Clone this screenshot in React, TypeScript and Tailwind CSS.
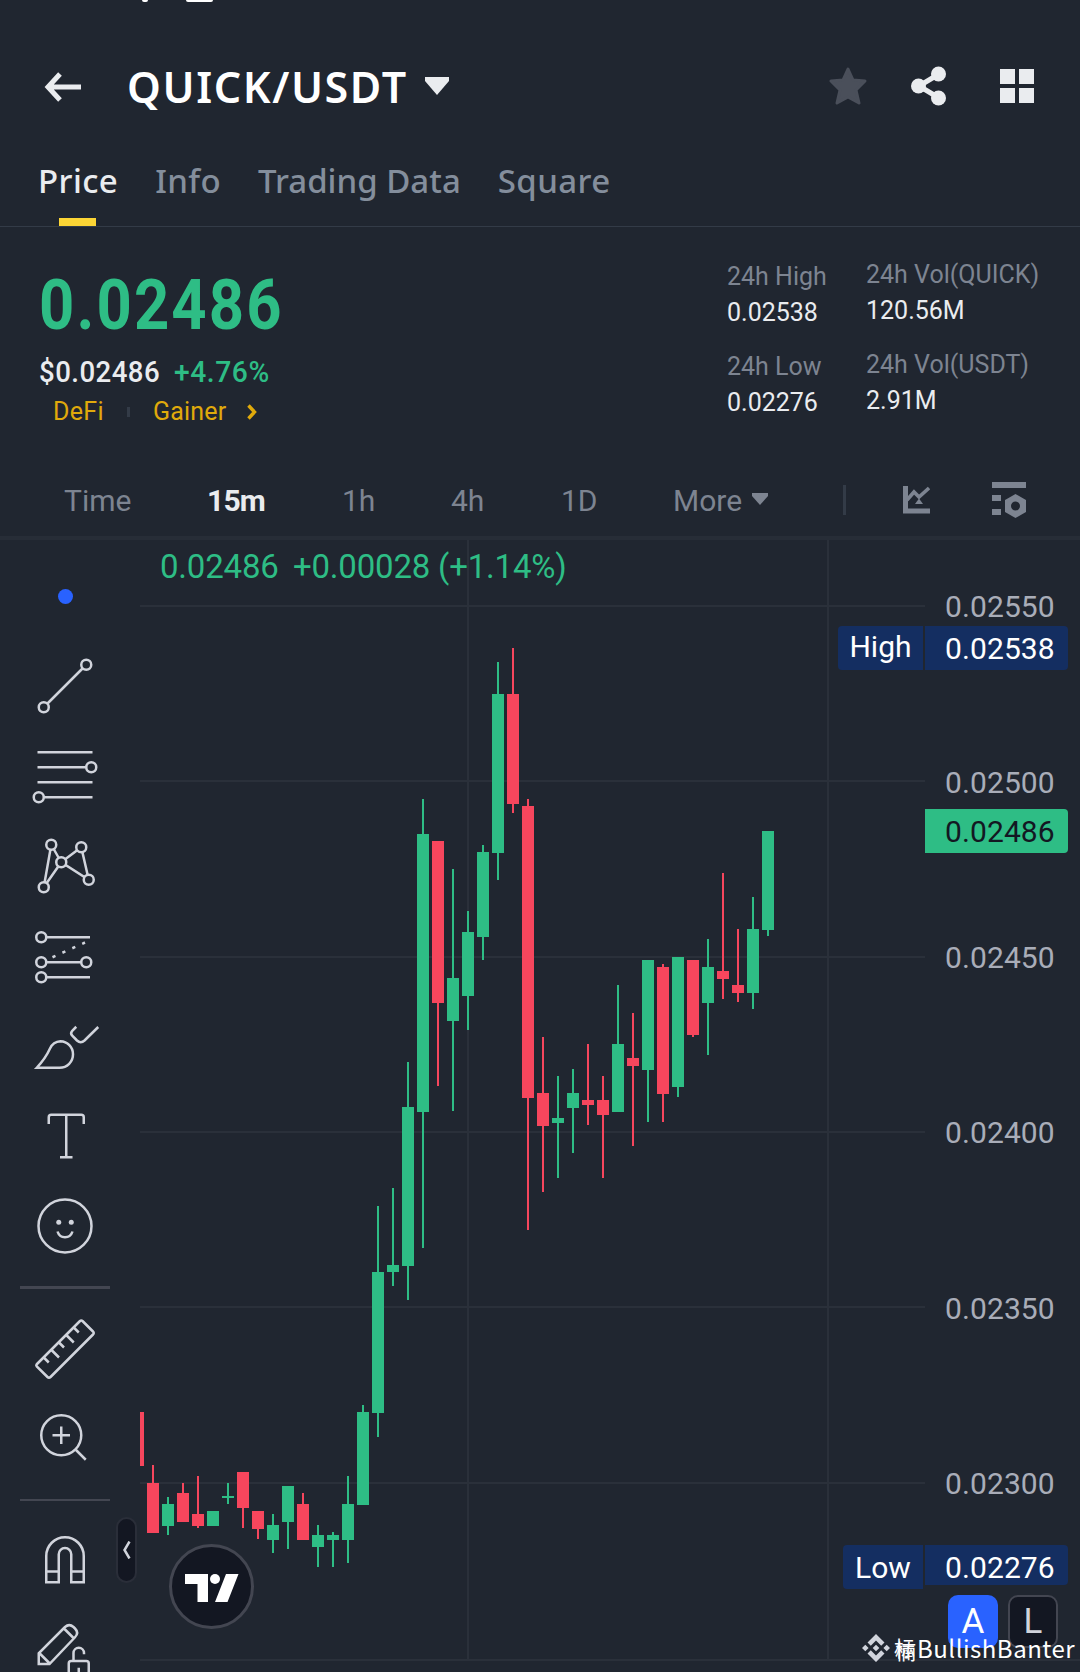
import type { ReactNode } from 'react'

// x, wick top, body top, body bottom, wick bottom, rising
type Candle = [number, number, number, number, number, boolean]

const candles: Candle[] = [
  [147, 1465, 1483, 1533, 1533, false],
  [162, 1497, 1504, 1526, 1535, true],
  [177, 1483, 1493, 1522, 1522, false],
  [192, 1476, 1514, 1526, 1528, false],
  [207, 1511, 1511, 1526, 1526, true],
  [222, 1483, 1496, 1498, 1504, true],
  [237, 1472, 1472, 1508, 1528, false],
  [252, 1511, 1511, 1529, 1539, false],
  [267, 1514, 1525, 1540, 1553, true],
  [282, 1486, 1486, 1522, 1549, true],
  [297, 1493, 1504, 1540, 1540, false],
  [312, 1525, 1535, 1547, 1567, true],
  [327, 1532, 1535, 1540, 1567, true],
  [342, 1476, 1504, 1540, 1563, true],
  [357, 1405, 1412, 1505, 1505, true],
  [372, 1206, 1272, 1413, 1437, true],
  [387, 1188, 1265, 1272, 1286, true],
  [402, 1062, 1107, 1266, 1300, true],
  [417, 799, 834, 1112, 1248, true],
  [432, 841, 841, 1003, 1086, false],
  [447, 869, 978, 1021, 1111, true],
  [462, 911, 932, 996, 1030, true],
  [477, 845, 852, 937, 960, true],
  [492, 662, 694, 853, 880, true],
  [507, 648, 694, 804, 813, false],
  [522, 799, 806, 1098, 1230, false],
  [537, 1037, 1093, 1126, 1192, false],
  [552, 1076, 1118, 1123, 1178, true],
  [567, 1069, 1093, 1108, 1153, true],
  [582, 1044, 1100, 1105, 1125, false],
  [597, 1076, 1100, 1115, 1178, false],
  [612, 985, 1044, 1112, 1112, true],
  [627, 1013, 1058, 1066, 1146, false],
  [642, 960, 960, 1070, 1122, true],
  [657, 964, 967, 1094, 1122, false],
  [672, 957, 957, 1087, 1097, true],
  [687, 960, 960, 1035, 1037, false],
  [702, 939, 967, 1003, 1055, true],
  [717, 873, 971, 979, 999, false],
  [732, 929, 985, 993, 1002, false],
  [747, 897, 929, 993, 1009, true],
  [762, 831, 831, 930, 936, true],
]

const gridRows = [605, 780, 956, 1131, 1306, 1482, 1659]
const gridCols = [467, 827]

const axisLabels = [
  { text: '0.02550', y: 607 },
  { text: '0.02500', y: 783 },
  { text: '0.02450', y: 958 },
  { text: '0.02400', y: 1133 },
  { text: '0.02350', y: 1309 },
  { text: '0.02300', y: 1484 },
]

function Header() {
  return (
    <header className="flex h-[150px] items-center pt-[23px] pl-[44px]">
      <svg width="38" height="30" viewBox="0 0 38 30" fill="none" stroke="#eaecef" strokeWidth="5">
        <path d="M37 15H4M16 2 4 15l12 13" />
      </svg>
      <h1 className="ml-[45px] w-[298px] text-[43px] leading-none font-semibold tracking-[1.6px] whitespace-nowrap text-white">
        QUICK/USDT
      </h1>
      <svg width="24" height="18" viewBox="0 0 24 18" fill="#eaecef" className="-mt-[2px]">
        <path d="M0 0h24v4L12 18 0 4z" />
      </svg>
      <div className="-mt-[2px] ml-[380px] flex items-center">
        <svg width="38" height="40" viewBox="0 0 38 40" fill="#4a4f5a" stroke="#4a4f5a" strokeWidth="3" strokeLinejoin="round">
          <path d="M19 3l5 11 12 1-9 9 3 13-11-6-11 6 3-13-9-9 12-1z" />
        </svg>
        <svg width="38" height="40" viewBox="0 0 38 40" className="ml-[43px]" fill="#eaecef">
          <path d="M29 8 9 20l20 12" fill="none" stroke="#eaecef" strokeWidth="5" />
          <circle cx="8.5" cy="20" r="7.5" />
          <circle cx="28.5" cy="8" r="7.5" />
          <circle cx="28.5" cy="32" r="7.5" />
        </svg>
        <svg width="34" height="34" viewBox="0 0 34 34" className="ml-[52px]" fill="#eaecef">
          <path d="M0 0h15v15H0zM19 0h15v15H19zM0 19h15v15H0zM19 19h15v15H19z" />
        </svg>
      </div>
    </header>
  )
}

function Tabs() {
  return (
    <nav className="flex h-[77px] gap-[37px] border-b border-[#333b47] pt-[14px] pl-[38px] text-[33px] leading-none font-medium tracking-[0.4px] text-[#848e9c]">
      <div className="relative text-[#eaecef]">
        Price
        <div className="absolute bottom-0 left-[21px] h-[8px] w-[37px] bg-[#fcd535]" />
      </div>
      <div>Info</div>
      <div className="tracking-[0px]">Trading Data</div>
      <div>Square</div>
    </nav>
  )
}

function Stat({ label, value }: { label: string; value: string }) {
  return (
    <div className="mb-[29px] text-[25px] leading-[25px] whitespace-nowrap">
      <div className="text-[#7d8491]">{label}</div>
      <div className="mt-[11px] text-[#eaecef]">{value}</div>
    </div>
  )
}

function Summary() {
  return (
    <section className="flex h-[233px] font-['Roboto',sans-serif]">
      <div className="w-[727px] pt-[43px] pl-[39px]">
        <div className="origin-left scale-x-[0.88] text-[70px] leading-none font-bold tracking-[2.4px] text-[#2ebd85]">
          0.02486
        </div>
        <div className="mt-[17px] flex text-[30px] leading-none font-medium">
          <span className="w-[135px] origin-left scale-x-[0.92] tracking-[0.5px] text-[#eaecef]">$0.02486</span>
          <span className="origin-left scale-x-[0.94] tracking-[0.6px] text-[#2ebd85]">+4.76%</span>
        </div>
        <div className="mt-[12px] flex items-center pl-[14px] text-[25px] leading-none text-[#e0aa0b]">
          <span className="w-[74px] tracking-[0.3px]">DeFi</span>
          <span className="h-[10px] w-[3px] bg-[#333b47]" />
          <span className="ml-[23px] w-[94px] tracking-[0.2px]">Gainer</span>
          <svg width="10" height="16" viewBox="0 0 10 16" fill="none" stroke="#e0aa0b" strokeWidth="3.4">
            <path d="M1.500 1.500 7.500 8l-6 6.500" />
          </svg>
        </div>
      </div>
      <div className="w-[139px] pt-[37px]">
        <Stat label="24h High" value="0.02538" />
        <Stat label="24h Low" value="0.02276" />
      </div>
      <div className="pt-[35px]">
        <Stat label="24h Vol(QUICK)" value="120.56M" />
        <Stat label="24h Vol(USDT)" value="2.91M" />
      </div>
    </section>
  )
}

function Timeframes() {
  return (
    <div className="flex h-[80px] items-center border-b-4 border-[#272d37] pt-[3px] pl-[64px] font-['Roboto',sans-serif] text-[30px] leading-none text-[#7d8491]">
      <span className="w-[143px] pt-[3px]">Time</span>
      <span className="w-[135px] pt-[3px] font-bold tracking-[-0.8px] text-[#eaecef]">15m</span>
      <span className="w-[109px] pt-[3px]">1h</span>
      <span className="w-[110px] pt-[3px]">4h</span>
      <span className="w-[112px] pt-[3px]">1D</span>
      <span className="w-[79px] pt-[3px]">More</span>
      <svg width="16" height="12" viewBox="0 0 16 12" fill="#7d8491" className="-mt-[2px]">
        <path d="M0 0h16v3L8 12 0 3z" />
      </svg>
      <div className="ml-[75px] h-[30px] w-[3px] bg-[#333b47]" />
      <svg width="27" height="28" viewBox="0 0 27 28" className="ml-[57px]" fill="none" stroke="#7d8491">
        <path d="M2.500 0v25H27" strokeWidth="5" />
        <path d="M4 14l7-8 5 5 10-9" strokeWidth="3.600" />
        <path d="M16 12.500l4 5.500h-8z" fill="#7d8491" stroke="none" />
      </svg>
      <svg width="34" height="36" viewBox="0 0 34 36" className="ml-[62px]" fill="#7d8491">
        <path d="M0 0h34v6H0zM0 13h9v6H0zM0 27h9v6H0z" />
        <path fillRule="evenodd" d="M23.500 12 34 18v12l-10.500 6L13 30V18zM23.500 19.500a4.500 4.500 0 1 0 0 9 4.500 4.500 0 0 0 0-9z" />
      </svg>
    </div>
  )
}

function Tool({ children }: { children: ReactNode }) {
  return (
    <div className="flex h-[90px] w-[90px] shrink-0 items-center justify-center">
      <svg width="70" height="70" viewBox="0 0 28 28" fill="none" stroke="#d1d4dc" strokeWidth="1" className="overflow-visible">
        {children}
      </svg>
    </div>
  )
}

function Toolbar() {
  return (
    <aside className="relative flex w-[140px] shrink-0 flex-col pt-[11px] pl-[20px]">
      <div className="flex h-[90px] w-[90px] shrink-0 items-center justify-center">
        <div className="h-[15px] w-[15px] rounded-full bg-[#2962ff]" />
      </div>
      <Tool>
        <path d="M7 21 21 7" />
        <circle cx="22.500" cy="5.500" r="2" />
        <circle cx="5.500" cy="22.500" r="2" />
      </Tool>
      <Tool>
        <path d="M3 4.500h22M3 10.500h19.500M3 16.500h22M5.500 22.500H25" />
        <circle cx="24.500" cy="10.500" r="2" />
        <circle cx="3.500" cy="22.500" r="2" />
      </Tool>
      <Tool>
        <path d="M5.500 22.500l3-17 4 7 8-6 3 13-11-7z" />
        <g fill="#202630">
          <circle cx="8.500" cy="5.500" r="2" />
          <circle cx="20.500" cy="6.500" r="2" />
          <circle cx="12.500" cy="12.500" r="2" />
          <circle cx="23.500" cy="19.500" r="2" />
          <circle cx="5.500" cy="22.500" r="2" />
        </g>
      </Tool>
      <Tool>
        <path d="M6.500 6.500H24M6.500 16.500h14M6.500 22.500H24" />
        <path d="M9 14.500 22 8.600" strokeDasharray="1.300 3.050" />
        <circle cx="4.500" cy="6.500" r="2" />
        <circle cx="4.500" cy="16.500" r="2" />
        <circle cx="22.500" cy="16.500" r="2" />
        <circle cx="4.500" cy="22.500" r="2" />
      </Tool>
      <Tool>
        <path d="M2.700 22.700C5.600 19.600 7 17.200 8 15a5 5 0 0 1 4.200-2.900 5.200 5.200 0 0 1 5 5.200c0 3-2.300 5.400-5.400 5.400z" />
        <path d="M18.500 6.300l-1.600 1.600q-.9 1 0 2l1.900 1.900q1.500 1.400 3 0l5.500-5.400" />
      </Tool>
      <Tool>
        <path d="M7.500 9.200V6.500a1 1 0 0 1 1-1h12a1 1 0 0 1 1 1v2.700M14.500 5.500v17M12 22.500h5" />
      </Tool>
      <Tool>
        <circle cx="14" cy="14" r="10.600" />
        <g fill="#d1d4dc" stroke="none">
          <circle cx="11.500" cy="12.500" r="1" />
          <circle cx="16.500" cy="12.500" r="1" />
        </g>
        <path d="M11 16.200c.5 1.600 1.700 2.300 3 2.300s2.500-.7 3-2.300" />
      </Tool>

      <div className="mt-[15px] mb-[15px] h-[3px] w-[90px] shrink-0 bg-[#434651]" />

      <Tool>
        <path d="M2.700 20.100 19.900 2.900q.6-.6 1.200 0l4.100 4.100q.6.600 0 1.200L8.200 25.200q-.6.600-1.200 0l-4.300-4.200q-.4-.5 0-.9z" />
        <path d="M5.500 17.400l2 2M8.600 14.400l3 3M11.600 11.400l2 2M14.500 8.400l3 3M17.500 5.400l2 2" />
      </Tool>
      <Tool>
        <circle cx="12.500" cy="12.500" r="8" />
        <path d="M12.500 9v7M9 12.500h7M18.300 18.300l4 4" />
      </Tool>

      <div className="mt-[15px] mb-[15px] h-[2px] w-[90px] shrink-0 bg-[#434651]" />

      <Tool>
        <path d="M6.500 22.500V12a7.500 7.500 0 0 1 15 0v10.500h-5V11.300a2.500 2.500 0 0 0-5 0v11.200zM6.500 18.200h5M16.500 18.200h5" />
      </Tool>
      <Tool>
        <path d="M3.500 19.200v-4.300L14 4.400q1.700-1.500 3.400 0l.6.600q1.700 1.700 0 3.500L7.800 19.200zM3.500 14.600l4.500 4.500M13.500 4.900l4 4" />
        <path d="M17.400 18v-3.200a2.100 2.100 0 0 1 4.200 0v.5M15.500 26v-7q0-1 1-1h6q1 0 1 1v7M19.500 20.700V26" />
      </Tool>

      {/* collapse handle */}
      <div className="absolute top-[977px] left-[116px] flex h-[66px] w-[21px] items-center justify-center rounded-full border-2 border-[#2a2e39] bg-[#131722]">
        <svg width="8" height="18" viewBox="0 0 8 18" fill="none" stroke="#d1d4dc" strokeWidth="2.500">
          <path d="M6.500.5 1.500 9l5 8.500" />
        </svg>
      </div>
    </aside>
  )
}

function Chart() {
  return (
    <div className="relative h-full w-[785px] shrink-0">
      <svg width="785" height="1132" viewBox="140 540 785 1132" shapeRendering="crispEdges">
        {gridRows.map((y) => (
          <rect key={y} x="140" y={y} width="785" height="2" fill="#2a303a" />
        ))}
        {gridCols.map((x) => (
          <rect key={x} x={x} y="540" width="2" height="1120" fill="#2a303a" />
        ))}
        <rect x="140" y="1412" width="4" height="54" fill="#f6465d" />
        {candles.map(([x, high, top, bottom, low, up]) => (
          <g key={x} fill={up ? '#2ebd85' : '#f6465d'}>
            <rect x={x + 5} y={high} width="2" height={low - high} />
            <rect x={x} y={top} width="12" height={bottom - top} />
          </g>
        ))}
      </svg>

      <div className="absolute top-[10px] left-[20px] flex font-['Roboto',sans-serif] text-[33px] leading-none tracking-[-0.2px] whitespace-nowrap text-[#2ebd85]">
        <span className="w-[133px]">0.02486</span>
        <span>+0.00028 (+1.14%)</span>
      </div>

      <svg className="absolute top-[1004px] left-[29px]" width="85" height="85" viewBox="0 0 85 85">
        <circle cx="42.500" cy="42.500" r="41" fill="#131722" stroke="#434651" strokeWidth="3" />
        <g fill="#fff">
          <path d="M16 30h23v28H28.500V40H16zM57 30h12.500L58.500 58H46z" />
          <circle cx="46" cy="35" r="5" />
        </g>
      </svg>
    </div>
  )
}

type PriceTagProps = { top: string; name: string; price: string; nameClass: string; priceClass: string }

function PriceTag({ top, name, price, nameClass, priceClass }: PriceTagProps) {
  return (
    <div className={`absolute right-[12px] flex gap-[2px] text-[30px] leading-none text-white ${top}`}>
      <div className={`flex h-[44px] items-center justify-center rounded-l-[4px] bg-[#142e61] ${nameClass}`}>{name}</div>
      <div className={`w-[143px] rounded-r-[4px] bg-[#142e61] pt-[8px] pl-[20px] tracking-[0.1px] ${priceClass}`}>{price}</div>
    </div>
  )
}

function Axis() {
  return (
    <div className="relative h-full w-[155px] font-['Roboto',sans-serif] text-[30px] leading-none">
      {axisLabels.map((l) => (
        <div key={l.text} className="absolute left-[20px] tracking-[0.1px] text-[#a9adb8]" style={{ top: l.y - 540 - 15 }}>
          {l.text}
        </div>
      ))}
      <PriceTag top="top-[86px]" name="High" price="0.02538" nameClass="w-[85px] pb-[3px]" priceClass="h-[44px]" />
      <div className="absolute top-[269px] left-0 h-[44px] w-[143px] rounded-r-[4px] bg-[#2ebd85] pt-[8px] pl-[20px] tracking-[0.1px] text-[#131722]">
        0.02486
      </div>
      <PriceTag top="top-[1005px]" name="Low" price="0.02276" nameClass="w-[80px] pt-[1px]" priceClass="h-[40px]" />
      <div className="absolute top-[1119px] left-0 h-[2px] w-[155px] bg-[#2a303a]" />
      <div className="absolute top-[1055px] left-[23px] flex gap-[10px] text-[35px] text-white">
        <div className="flex h-[53px] w-[50px] items-center justify-center rounded-[10px] bg-[#2962ff]">A</div>
        <div className="flex h-[53px] w-[50px] items-center justify-center rounded-[10px] border-2 border-[#434651] bg-[#131722] text-[#d1d4dc]">
          L
        </div>
      </div>
    </div>
  )
}

function Watermark() {
  return (
    <div className="absolute top-[1634px] left-[862px] flex items-center text-[24px] leading-[28px] text-white">
      <svg width="28" height="28" viewBox="0 0 28 28" fill="#d1d4dc">
        <path d="M14 0l8.500 8.500-3.300 3.300L14 6.600l-5.200 5.200-3.300-3.300zM14 28l8.500-8.500-3.300-3.300-5.200 5.200-5.200-5.200-3.300 3.300zM3.300 10.700 6.600 14l-3.300 3.300L0 14zM24.700 10.700 28 14l-3.300 3.300-3.300-3.300zM14 10.700l3.300 3.300-3.300 3.300-3.300-3.300z" />
      </svg>
      <div className="relative ml-[4px] h-[28px] w-[23px] font-['Noto_Sans_CJK_SC',sans-serif] text-[21px]">
        <span className="absolute -top-px left-0">标</span>
        <span className="absolute top-[2px] left-px">楠</span>
      </div>
      <span className="font-['Noto_Sans_CJK_SC',sans-serif] tracking-[0.5px]">BullishBanter</span>
    </div>
  )
}

export default function App() {
  return (
    <main className="relative h-[1672px] w-[1080px] overflow-hidden bg-[#202630] font-['Noto_Sans',sans-serif]">
      {/* bottom of the status bar icons */}
      <div className="absolute top-0 left-[142px] h-[2px] w-[6px] rounded-b-full bg-white" />
      <div className="absolute top-0 left-[186px] h-[2px] w-[27px] rounded-b-[4px] bg-white" />
      <Header />
      <Tabs />
      <Summary />
      <Timeframes />
      <div className="flex h-[1132px]">
        <Toolbar />
        <Chart />
        <Axis />
      </div>
      <Watermark />
    </main>
  )
}
